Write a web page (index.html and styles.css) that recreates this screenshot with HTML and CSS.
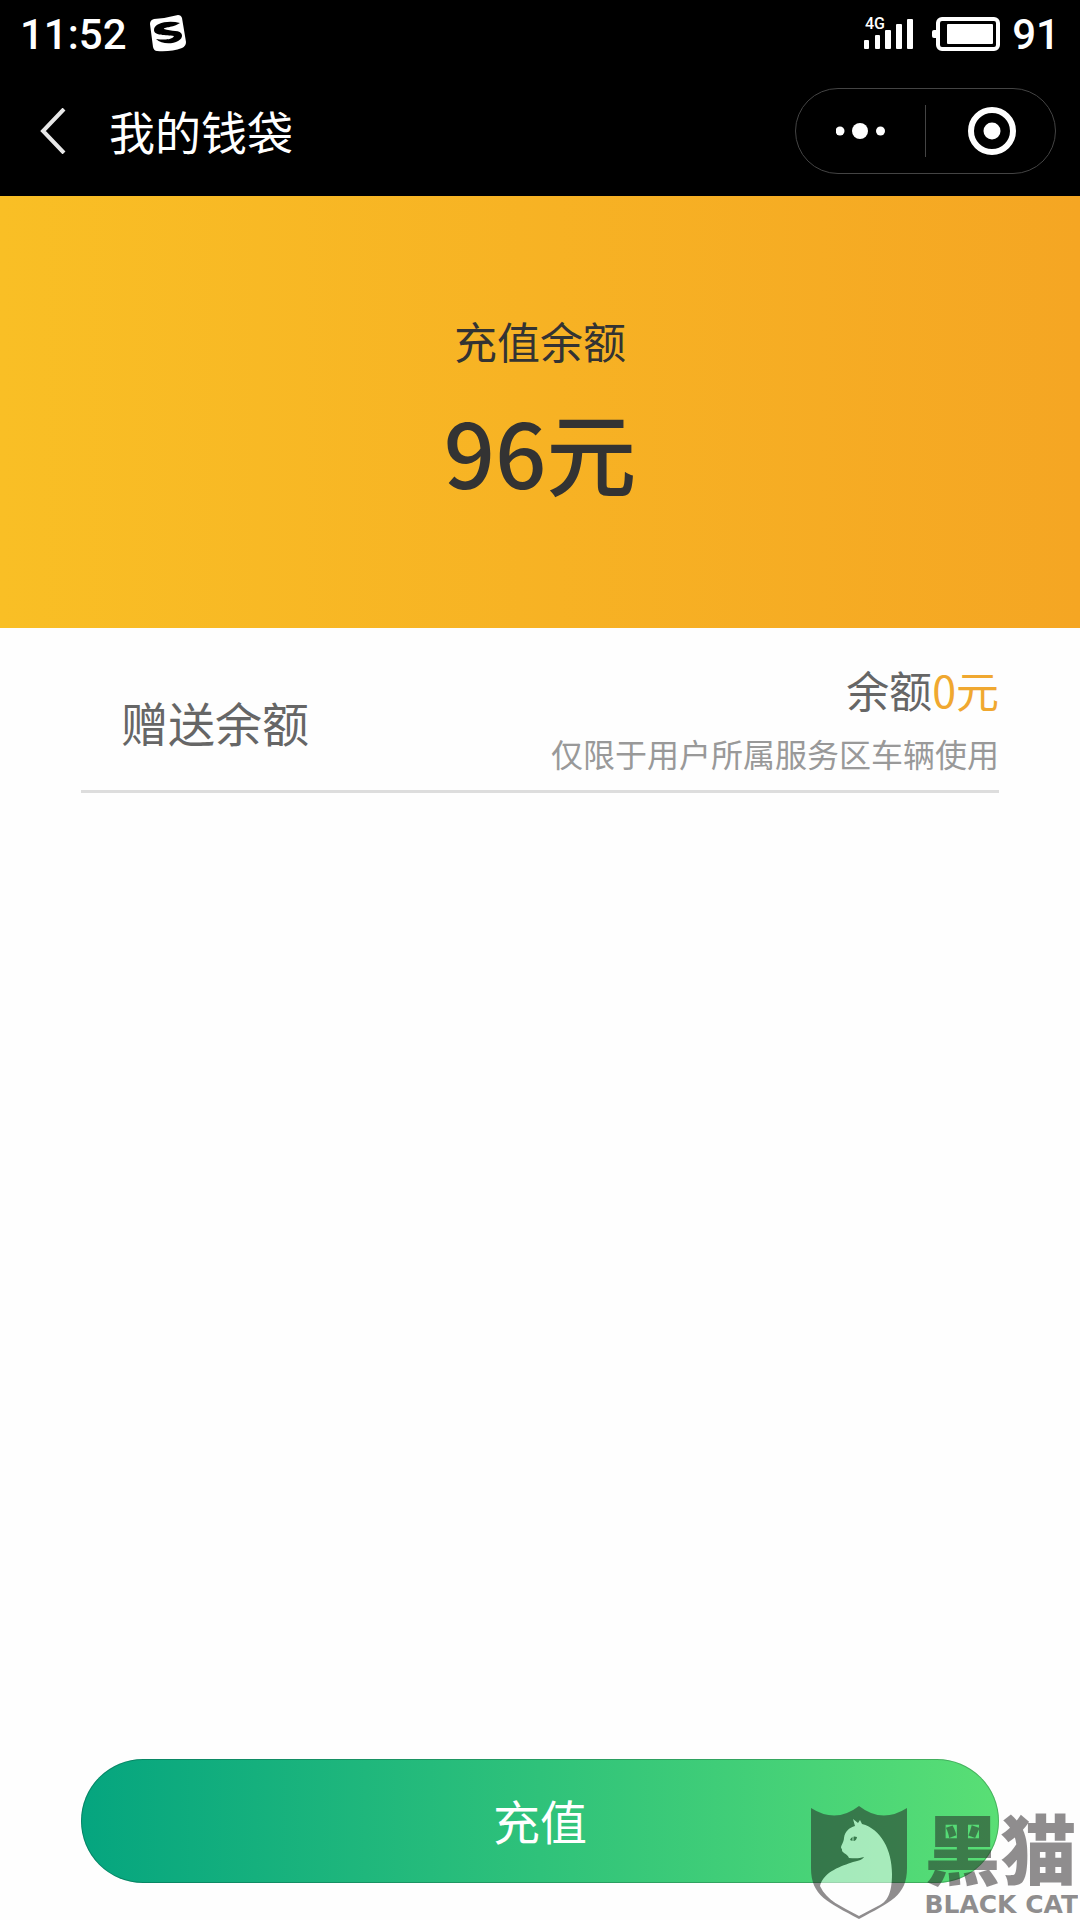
FILE: index.html
```html
<!DOCTYPE html>
<html lang="zh-CN">
<head>
    <meta charset="UTF-8">
    <meta name="viewport" content="width=device-width, initial-scale=1.0">
    <title>我的钱袋</title>
    <link rel="stylesheet" href="styles.css">
</head>
<body>
    <div class="status-bar">
        <span class="time">11:52</span>
        <svg class="icon-sogou" width="38" height="38" viewBox="0 0 38 38">
            <path d="M5 4 Q18 3 29 0 Q32 0 33 3 L37 27 Q37 31 33 33 Q22 37 8 36 Q5 36 4 32 L1 9 Q1 5 5 4 Z" fill="#fff"/>
            <path d="M31 8 C19 5 5 8 5 15 C5 21 17 20 25 21 C23 25 15 25 7 24 C15 32 34 28 33 20 C32 14 22 17 15 14 C14 12 24 13 31 8 Z" fill="#000"/>
        </svg>
        <div class="status-right">
            <svg width="52" height="44" viewBox="0 -5 52 44">
                <text class="network" x="1" y="12">4G</text>
                <g fill="#fff">
                    <rect x="0" y="23" width="5" height="9" rx="1"/>
                    <rect x="11" y="18" width="5" height="14" rx="1"/>
                    <rect x="21" y="13" width="6" height="19" rx="1"/>
                    <rect x="32" y="7" width="6" height="25" rx="1"/>
                    <rect x="43" y="2" width="6" height="30" rx="1"/>
                </g>
            </svg>
            <svg width="68" height="34" viewBox="0 0 68 34">
                <rect x="0" y="13" width="6" height="8" rx="2" fill="#fff"/>
                <rect x="6" y="2" width="60" height="30" rx="4" fill="none" stroke="#fff" stroke-width="4"/>
                <rect x="15" y="7" width="46" height="20" rx="1" fill="#fff"/>
            </svg>
            <span class="battery">91</span>
        </div>
    </div>

    <header class="nav">
        <button class="back" aria-label="返回">
            <svg width="26" height="46" viewBox="0 0 26 46">
                <path d="M24 1 L3 23 L24 45" fill="none" stroke="#e8e8e8" stroke-width="4"/>
            </svg>
        </button>
        <h1>我的钱袋</h1>
        <div class="capsule">
            <button aria-label="更多">
                <svg width="50" height="16" viewBox="0 0 50 16">
                    <g fill="#fff">
                        <circle cx="4" cy="8" r="4.5"/>
                        <circle cx="24" cy="8" r="8"/>
                        <circle cx="44.5" cy="8" r="4.5"/>
                    </g>
                </svg>
            </button>
            <button aria-label="关闭">
                <svg width="50" height="48" viewBox="0 0 50 48">
                    <circle cx="26" cy="24" r="21" fill="none" stroke="#fff" stroke-width="6"/>
                    <circle cx="26" cy="24" r="8.5" fill="#fff"/>
                </svg>
            </button>
        </div>
    </header>

    <section class="balance">
        <p class="balance-label">充值余额</p>
        <p class="balance-value">96元</p>
    </section>

    <main>
        <div class="gift">
            <span class="gift-title">赠送余额</span>
            <div class="gift-info">
                <p class="gift-amount">余额<span class="amount">0元</span></p>
                <p class="gift-note">仅限于用户所属服务区车辆使用</p>
            </div>
        </div>
    </main>

    <footer>
        <button class="recharge">充值</button>
    </footer>

    <div class="watermark">
        <svg width="98" height="116" viewBox="0 0 98 116">
            <path d="M1 4 Q26 20 49 2 Q72 20 97 4 V64 C97 92 80 98 49 115 C18 98 1 92 1 64 Z" fill="#231e21"/>
            <path d="M43 15 L48 19 L50 16 L52 20 C71 25 82 46 82 70 C82 90 77 98 68 102 L49 112 C31 102 17 97 10 82 C14 67 32 62 43 58 C49 57 53 55 54 53 C48 55 43 54 39 54 C37 49 31 49 32 45 C29 43 34 39 34 34 C35 27 39 24 45 22 Z" fill="#fff"/>
            <path d="M40 36 Q42 31 47 33 Q46 39 40 36 Z" fill="#231e21"/>
            <path d="M43 32 V37" stroke="#fff" stroke-width="1"/>
        </svg>
        <div class="watermark-text">
            <span class="watermark-cn">黑猫</span>
            <span class="watermark-en">BLACK CAT</span>
        </div>
    </div>
</body>
</html>
```

FILE: styles.css
```css
* {
    box-sizing: border-box;
    margin: 0;
    padding: 0;
}

body {
    position: relative;
    display: flex;
    flex-direction: column;
    min-height: 100vh;
    background-color: #fefefe;
    color: #666;
    font-family: 'Noto Sans CJK SC', sans-serif;
}

button {
    border: none;
    background: none;
    color: #fff;
    font-family: inherit;
    cursor: pointer;
}

svg {
    display: block;
}

.status-bar {
    display: flex;
    align-items: center;
    height: 66px;
    padding: 2px 20px 0 20px;
    background-color: #000;
    color: #fff;
    font-family: Roboto, sans-serif;
    font-size: 42px;
    font-weight: 500;
}

.icon-sogou {
    margin-left: 22px;
}

.status-right {
    display: flex;
    align-items: center;
    gap: 16px;
    margin-left: auto;
}

.battery {
    margin-left: -4px;
}

.network {
    fill: #fff;
    font-size: 16px;
    font-weight: 500;
}

.nav {
    display: flex;
    align-items: center;
    height: 130px;
    padding: 0 24px 0 40px;
    background-color: #000;
    color: #fff;
}

.nav h1 {
    margin-left: 43px;
    padding-bottom: 2px;
    font-size: 46px;
    font-weight: 400;
}

.capsule {
    display: flex;
    align-items: center;
    width: 261px;
    height: 86px;
    margin-left: auto;
    border: 1px solid #444;
    border-radius: 43px;
}

.capsule button {
    display: flex;
    flex: 1;
    align-items: center;
    justify-content: center;
    height: 52px;
}

.capsule button + button {
    border-left: 1px solid #444;
}

.balance {
    height: 432px;
    padding-top: 112px;
    background: linear-gradient(to right, #f9bf25, #f5a623);
    color: #333;
    text-align: center;
}

.balance-label {
    font-size: 43px;
    line-height: 64px;
}

.balance-value {
    margin-top: 14px;
    font-size: 90px;
    font-weight: 500;
    line-height: 128px;
}

main {
    flex: 1;
    padding: 0 81px;
}

.gift {
    display: flex;
    align-items: center;
    justify-content: space-between;
    height: 165px;
    padding-left: 40px;
    border-bottom: 3px solid #ddd;
}

.gift-title {
    padding-top: 24px;
    font-size: 47px;
}

.gift-info {
    padding-top: 24px;
    text-align: right;
}

.gift-amount {
    font-size: 43px;
    line-height: 64px;
}

.amount {
    color: #f0a830;
}

.gift-note {
    color: #999;
    font-size: 32px;
    line-height: 64px;
}

footer {
    padding: 0 81px 37px;
}

.recharge {
    display: block;
    width: 100%;
    height: 124px;
    padding-bottom: 4px;
    border-radius: 62px;
    background: linear-gradient(to right, #05a57f, #59df75);
    box-shadow: inset 0 0 0 1px rgba(0, 0, 0, 0.2);
    font-size: 47px;
}

.watermark {
    position: absolute;
    right: 2px;
    bottom: 0;
    display: flex;
    align-items: flex-end;
    gap: 16px;
    color: #231e21;
    opacity: 0.5;
}

.watermark-text {
    display: flex;
    flex-direction: column;
    gap: 6px;
}

.watermark-cn {
    font-size: 76px;
    font-weight: 900;
    line-height: 76px;
}

.watermark-en {
    font-family: 'DejaVu Sans', sans-serif;
    font-size: 25px;
    font-weight: 700;
    line-height: 30px;
}
```
